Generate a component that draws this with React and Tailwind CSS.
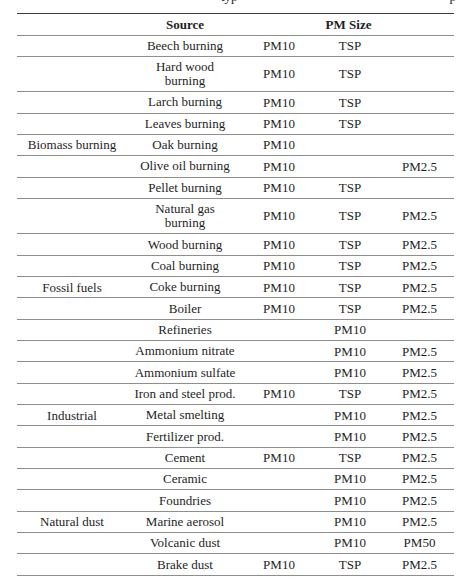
const rows = [
  { src: "Beech burning", a: "PM10", b: "TSP", c: "" },
  { src: ["Hard wood", "burning"], a: "PM10", b: "TSP", c: "" },
  { src: "Larch burning", a: "PM10", b: "TSP", c: "" },
  { src: "Leaves burning", a: "PM10", b: "TSP", c: "" },
  { cat: "Biomass burning", src: "Oak burning", a: "PM10", b: "", c: "" },
  { src: "Olive oil burning", a: "PM10", b: "", c: "PM2.5" },
  { src: "Pellet burning", a: "PM10", b: "TSP", c: "" },
  { src: ["Natural gas", "burning"], a: "PM10", b: "TSP", c: "PM2.5" },
  { src: "Wood burning", a: "PM10", b: "TSP", c: "PM2.5" },
  { src: "Coal burning", a: "PM10", b: "TSP", c: "PM2.5" },
  { cat: "Fossil fuels", src: "Coke burning", a: "PM10", b: "TSP", c: "PM2.5" },
  { src: "Boiler", a: "PM10", b: "TSP", c: "PM2.5" },
  { src: "Refineries", a: "", b: "PM10", c: "" },
  { src: "Ammonium nitrate", a: "", b: "PM10", c: "PM2.5" },
  { src: "Ammonium sulfate", a: "", b: "PM10", c: "PM2.5" },
  { src: "Iron and steel prod.", a: "PM10", b: "TSP", c: "PM2.5" },
  { cat: "Industrial", src: "Metal smelting", a: "", b: "PM10", c: "PM2.5" },
  { src: "Fertilizer prod.", a: "", b: "PM10", c: "PM2.5" },
  { src: "Cement", a: "PM10", b: "TSP", c: "PM2.5" },
  { src: "Ceramic", a: "", b: "PM10", c: "PM2.5" },
  { src: "Foundries", a: "", b: "PM10", c: "PM2.5" },
  { cat: "Natural dust", src: "Marine aerosol", a: "", b: "PM10", c: "PM2.5" },
  { src: "Volcanic dust", a: "", b: "PM10", c: "PM50" },
  { src: "Brake dust", a: "PM10", b: "TSP", c: "PM2.5" },
];

const Row = ({ row }) => {
  const tall = Array.isArray(row.src);
  return (
    <div
      className={`flex items-center border-b border-[#8e8e8e] ${tall ? "h-[35.5px]" : "h-[21.33px]"}`}
    >
      <div className="w-[110px] text-center">{row.cat || ""}</div>
      <div className="w-[116px] text-center leading-[14px]">
        {tall ? (
          <>
            {row.src[0]}
            <br />
            {row.src[1]}
          </>
        ) : (
          row.src
        )}
      </div>
      <div className="w-[72px] text-center">{row.a}</div>
      <div className="w-[70px] text-center">{row.b}</div>
      <div className="w-[69px] text-center">{row.c}</div>
    </div>
  );
};

const App = () => {
  return (
    <div className="w-[474px] h-[577px] overflow-hidden bg-white text-[#1e1e1e] text-[13px] font-['Liberation_Serif',serif]">
      <div className="flex h-[13px] overflow-hidden text-[13px] leading-[13px]">
        <span className="ml-[221px] mt-[-10px]">typ</span>
        <span className="ml-auto mr-[18px] mt-[-10px]">p</span>
      </div>
      <div className="mx-[17px] w-[437px]">
        <div className="flex items-center h-[22.5px] border-t-[1.5px] border-b border-t-[#3c3c3c] border-b-[#8e8e8e] font-bold">
          <div className="w-[110px]" />
          <div className="w-[116px] text-center">Source</div>
          <div className="w-[211px] text-center">PM Size</div>
        </div>
        {rows.map((row, i) => (
          <Row key={i} row={row} />
        ))}
      </div>
    </div>
  );
};

export default App;
